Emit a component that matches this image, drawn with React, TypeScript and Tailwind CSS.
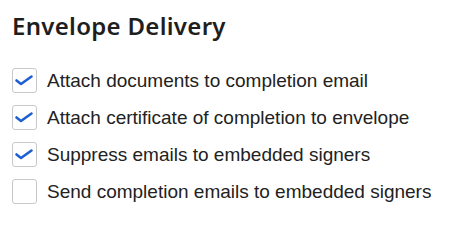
const options = [
  { label: 'Attach documents to completion email', checked: true },
  { label: 'Attach certificate of completion to envelope', checked: true },
  { label: 'Suppress emails to embedded signers', checked: true },
  { label: 'Send completion emails to embedded signers', checked: false },
]

function CheckBox({ checked }: { checked: boolean }) {
  return (
    <span className="flex h-[25px] w-[25px] shrink-0 rounded-[3px] border border-[#c9c9c9] bg-white">
      {checked && (
        <svg width="23" height="23" viewBox="0 0 23 23" fill="none">
          <path d="M3.5 11.5 L8 15 L18.5 7.5" stroke="#1f5fd4" strokeWidth="2.6" strokeLinecap="round" strokeLinejoin="round" />
        </svg>
      )}
    </span>
  )
}

export default function App() {
  return (
    <div className="h-[234px] w-[474px] bg-white px-[12px] pt-[10px]">
      <h2 className="font-['Noto_Sans',sans-serif] text-[24px] font-semibold leading-[32px] tracking-[0.3px] text-[#1e1e1e]">
        Envelope Delivery
      </h2>
      <div className="mt-[26px] flex flex-col gap-[12px]">
        {options.map((o) => (
          <label key={o.label} className="flex items-center gap-[10px]">
            <CheckBox checked={o.checked} />
            <span className="font-['Liberation_Sans',Arial,sans-serif] text-[19px] leading-[25px] text-[#222]">{o.label}</span>
          </label>
        ))}
      </div>
    </div>
  )
}
